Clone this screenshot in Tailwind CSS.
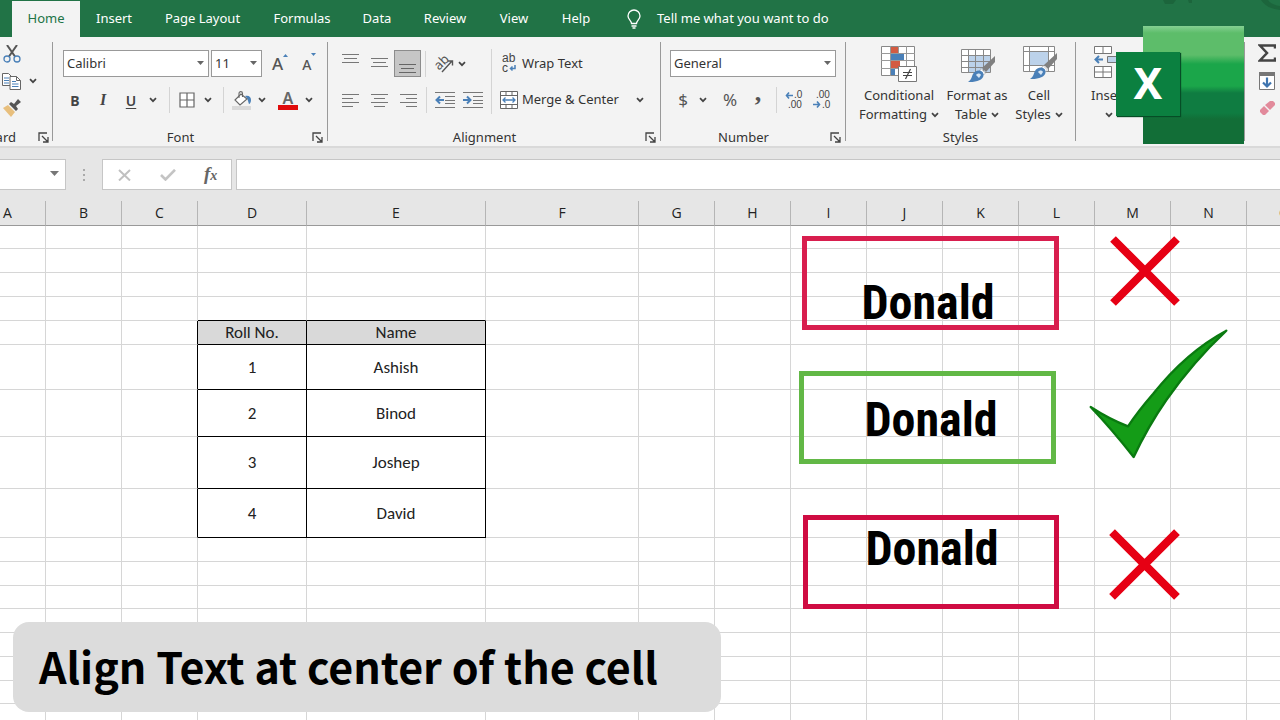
<!DOCTYPE html>
<html lang="en">
<head>
<meta charset="utf-8">
<title>Align Text at center of the cell</title>
<script src="https://cdn.jsdelivr.net/npm/@tailwindcss/browser@4"></script>
</head>
<body class="relative flex h-screen flex-col overflow-hidden bg-white font-['Noto_Sans','Open_Sans',sans-serif] text-[13px] text-[#333]">

<svg class="hidden" aria-hidden="true">
  <symbol id="chev" viewBox="0 0 8 6"><path d="M1 1.2 4 4.2 7 1.2" fill="none" stroke="#444" stroke-width="1.7"/></symbol>
  <symbol id="drop" viewBox="0 0 7 4"><path d="M0 0h7L3.500 4z" fill="#666"/></symbol>
  <symbol id="launch" viewBox="0 0 11 11"><path d="M1 9V1h8M4 4l5.500 5.500M10 5v5H5" fill="none" stroke="#444" stroke-width="1.300"/></symbol>
  <symbol id="paint" viewBox="0 0 28 28"><path d="M27 1v6l-9 10-4-4z" fill="#808080"/><path d="M13 13.500l4.500 4.500-2 2-4-4z" fill="#fff" stroke="#999" stroke-width=".6"/><path d="M11 15.500c3 0 5 2.500 4.500 5C15 25 8 27.500 0 27c4-3 3.500-5 5-8 1-2.300 3.500-3.500 6-3.500z" fill="#4a80b8"/><path d="M8 20c1.500-2 4-2 5 0l-2 3z" fill="#d7e6f5"/></symbol>
</svg>

<nav class="flex h-[37px] shrink-0 items-end bg-[#217346] pl-3 text-white" aria-label="Ribbon tabs">
  <button class="h-9 w-[68px] bg-[#f3f3f3] text-[#217346]">Home</button>
  <button class="h-9 w-[68px]">Insert</button>
  <button class="h-9 w-[109px]">Page Layout</button>
  <button class="h-9 w-[90px]">Formulas</button>
  <button class="h-9 w-[60px]">Data</button>
  <button class="h-9 w-[76px]">Review</button>
  <button class="h-9 w-[62px]">View</button>
  <button class="h-9 w-[62px]">Help</button>
  <button class="ml-5 flex h-9 items-center gap-4">
    <svg class="h-5 w-[14px]" viewBox="0 0 14 20" fill="none" stroke="#fff" stroke-width="1.300"><path d="M4.500 14.500c0-3-3.500-4-3.500-7.500a6 6 0 0 1 12 0c0 3.500-3.500 4.500-3.500 7.500zM4.500 17h5M5.500 19h3"/></svg>
    <span>Tell me what you want to do</span>
  </button>
  <svg class="ml-auto h-[37px] w-[130px]" viewBox="0 0 130 37"><path d="M13 0h13l-3 4h-8zM38 0h4v3h-3zM111 0c4 6 10 9 19 10V6c-6-1-10-3-12-6z" fill="#1c653c"/></svg>
</nav>

<header class="flex h-[109px] shrink-0 overflow-hidden bg-[#f3f3f3] pt-[5px] text-[#333]">
  <!-- Clipboard -->
  <section class="flex h-[99px] w-[53px] shrink-0 flex-col border-r border-[#999]">
    <button class="h-6 pl-[3px]" aria-label="Cut"><svg class="h-[18px] w-[18px]" viewBox="0 0 18 18" fill="none"><path d="M4 0l8 11.500M14 0L6 11.500" stroke="#555" stroke-width="2"/><circle cx="4" cy="14" r="3" stroke="#4a80b8" stroke-width="1.300"/><circle cx="14" cy="14" r="3" stroke="#4a80b8" stroke-width="1.300"/></svg></button>
    <button class="flex h-[30px] items-center gap-2 pl-[2px]" aria-label="Copy"><svg class="h-[17px] w-[19px]" viewBox="0 0 19 17" fill="#fff" stroke="#666"><path d="M.5.5h6l3 3v9h-9z"/><path d="M2 5h5M2 7.500h5M2 10h5" stroke="#4a80b8"/><path d="M8 3.500h6.500l4 4v9H8z"/><path d="M14.500 3.500v4h4" fill="none"/><path d="M10 8.500h4M10 11h6.500M10 13.500h6.500" stroke="#4a80b8"/></svg><svg class="h-[6px] w-2"><use href="#chev"/></svg></button>
    <button class="h-6 pl-[3px]" aria-label="Format Painter"><svg class="h-[18px] w-[19px]" viewBox="0 0 19 18"><path d="M0 9l5-3 7 7-4 5z" fill="#e8bf7d"/><path d="M6 5l7 7 2-2-2-3 5-4-3-3-4 5-3-2z" fill="#555"/></svg></button>
    <div class="mt-auto -mb-1 flex h-4 items-center"><span class="flex w-4 justify-end overflow-hidden leading-4 whitespace-nowrap">Clipboard</span><button class="ml-[22px]" aria-label="Clipboard options"><svg class="h-[11px] w-[11px]"><use href="#launch"/></svg></button></div>
  </section>

  <!-- Font -->
  <section class="flex h-[99px] w-[275px] shrink-0 flex-col border-r border-[#999]">
    <div class="flex h-[43px] items-center pl-[10px]">
      <label class="relative"><select aria-label="Font name" class="block h-[27px] w-[146px] appearance-none border border-[#999] bg-white pl-[3px]"><option>Calibri</option></select><svg class="pointer-events-none absolute top-[11px] right-[5px] h-1 w-[7px]"><use href="#drop"/></svg></label>
      <label class="relative ml-[2px]"><select aria-label="Font size" class="block h-[27px] w-[51px] appearance-none border border-[#999] bg-white pl-[3px]"><option>11</option></select><svg class="pointer-events-none absolute top-[11px] right-[5px] h-1 w-[7px]"><use href="#drop"/></svg></label>
      <button class="ml-[10px] flex font-medium" aria-label="Increase font size"><span class="text-[17px] leading-5 text-[#555]">A</span><svg class="h-[3px] w-[5px]" viewBox="0 0 5 3"><path d="M2.500 0 5 3H0z" fill="#4a80b8"/></svg></button>
      <button class="ml-[14px] flex font-medium" aria-label="Decrease font size"><span class="pt-[2px] text-[14px] leading-5 text-[#555]">A</span><svg class="h-[3px] w-[5px]" viewBox="0 0 5 3"><path d="M0 0h5L2.500 3z" fill="#4a80b8"/></svg></button>
    </div>
    <div class="flex h-[30px] items-center pl-2 text-[#444]">
      <button class="w-7 text-[14px] font-bold">B</button>
      <button class="w-7 font-['Liberation_Serif',serif] text-[16px] font-bold italic">I</button>
      <button class="w-7 text-[14px] font-semibold underline underline-offset-2">U</button>
      <button class="grid w-4 place-items-center" aria-label="Underline styles"><svg class="h-[6px] w-2"><use href="#chev"/></svg></button>
      <i class="ml-2 h-[26px] w-px bg-[#d4d4d4]"></i>
      <button class="ml-[9px]" aria-label="Borders"><svg class="h-4 w-4" viewBox="0 0 16 16" fill="#fff" stroke="#666" stroke-width="1.200"><path d="M1 1h14v14H1zM8 1v14M1 8h14"/></svg></button>
      <button class="ml-[9px]" aria-label="Border styles"><svg class="h-[6px] w-2"><use href="#chev"/></svg></button>
      <i class="ml-[11px] h-[26px] w-px bg-[#d4d4d4]"></i>
      <button class="ml-2" aria-label="Fill color"><svg class="h-[19px] w-5" viewBox="0 0 20 19"><path d="M0 15h19v4H0z" fill="#d9d9d9"/><path d="M13 5c4-1 6 1 6 4 0 2-1 4-2 4-1-3-1-5-4-8z" fill="#4a80b8"/><path d="M3 9l6-6 6 5-7 6z" fill="#fff" stroke="#666" stroke-width="1.100"/><path d="M7 7V2.500c0-2.500 3.500-2.500 3.500 0V6" fill="none" stroke="#666" stroke-width="1.100"/></svg></button>
      <button class="ml-[6px]" aria-label="Fill color options"><svg class="h-[6px] w-2"><use href="#chev"/></svg></button>
      <button class="ml-[12px] flex w-5 flex-col items-center" aria-label="Font color"><span class="text-[16px] leading-[14px] font-semibold text-[#666]">A</span><i class="h-[5px] w-5 bg-[#e00b0b]"></i></button>
      <button class="ml-[7px]" aria-label="Font color options"><svg class="h-[6px] w-2"><use href="#chev"/></svg></button>
    </div>
    <div class="mt-auto -mb-1 flex h-4 items-center leading-4"><span class="flex-1 text-center">Font</span><button class="w-[19px] pl-1" aria-label="Font options"><svg class="h-[11px] w-[11px]"><use href="#launch"/></svg></button></div>
  </section>

  <!-- Alignment -->
  <section class="flex h-[99px] w-[333px] shrink-0 flex-col border-r border-[#999]">
    <div class="flex pl-[14px]">
      <div>
        <div class="flex h-[43px] items-center">
          <button aria-label="Top align"><svg class="h-5 w-[17px]" viewBox="0 0 17 20" stroke="#777"><path d="M0 .5h17M2 4.500h13M0 8.500h17"/></svg></button>
          <button class="ml-3" aria-label="Middle align"><svg class="h-5 w-[17px]" viewBox="0 0 17 20" stroke="#777"><path d="M0 4.500h17M2 8.500h13M0 12.500h17"/></svg></button>
          <button class="ml-[6px] grid h-[27px] w-[27px] place-items-center border border-[#8c8c8c] bg-[#c6c6c6]" aria-label="Bottom align" aria-pressed="true"><svg class="h-5 w-[17px]" viewBox="0 0 17 20" stroke="#666"><path d="M0 10.500h17M2 14.500h13M0 18.500h17"/></svg></button>
          <i class="ml-1 h-[26px] w-px bg-[#d4d4d4]"></i>
          <button class="ml-2 flex items-center gap-1" aria-label="Orientation"><svg class="h-5 w-[20px] overflow-visible" viewBox="0 0 20 20" fill="none" stroke="#555" stroke-width="1.400"><text x="1" y="15" transform="rotate(-45 5 11)" font-size="13" fill="#555" stroke="none">ab</text><path d="M8 18 18 7M14 7h4.500v4.500"/></svg><svg class="h-[6px] w-2"><use href="#chev"/></svg></button>
        </div>
        <div class="flex h-[30px] items-center">
          <button aria-label="Align left"><svg class="h-[13px] w-[17px]" viewBox="0 0 17 13" stroke="#777"><path d="M0 .5h17M0 4.500h11M0 8.500h17M0 12.500h11"/></svg></button>
          <button class="ml-3" aria-label="Center"><svg class="h-[13px] w-[17px]" viewBox="0 0 17 13" stroke="#777"><path d="M0 .5h17M3 4.500h11M0 8.500h17M3 12.500h11"/></svg></button>
          <button class="ml-3" aria-label="Align right"><svg class="h-[13px] w-[17px]" viewBox="0 0 17 13" stroke="#777"><path d="M0 .5h17M6 4.500h11M0 8.500h17M6 12.500h11"/></svg></button>
          <i class="ml-[9px] h-[26px] w-px bg-[#d4d4d4]"></i>
          <button class="ml-2" aria-label="Decrease indent"><svg class="h-4 w-5" viewBox="0 0 20 16" fill="none" stroke="#777"><path d="M0 .5h20M10 4.500h10M10 8.500h10M10 11.500h10M0 15.500h20"/><path d="M9 8H1.500M5 4.500 1.500 8 5 11.500" stroke="#4a80b8" stroke-width="2"/></svg></button>
          <button class="ml-2" aria-label="Increase indent"><svg class="h-4 w-5" viewBox="0 0 20 16" fill="none" stroke="#777"><path d="M0 .5h20M10 4.500h10M10 8.500h10M10 11.500h10M0 15.500h20"/><path d="M0 8h7.500M4 4.500 7.500 8 4 11.500" stroke="#4a80b8" stroke-width="2"/></svg></button>
        </div>
      </div>
      <i class="mt-[7px] ml-2 h-[65px] w-px bg-[#d4d4d4]"></i>
      <div class="ml-2">
        <button class="flex h-[43px] items-center gap-1 whitespace-nowrap"><svg class="h-[19px] w-[18px] overflow-visible font-['Liberation_Sans',sans-serif]" viewBox="0 0 18 19" fill="#444" font-size="12"><text x="2" y="8">ab</text><text x="2" y="18">c</text><path d="M15 11v3.500h-4M12.500 12.500l-2 2 2 2" fill="none" stroke="#4a80b8" stroke-width="1.500"/></svg><span>Wrap Text</span></button>
        <div class="flex h-[30px] items-center"><button class="flex w-[136px] items-center gap-1 whitespace-nowrap"><svg class="h-[18px] w-[18px]" viewBox="0 0 18 18" fill="#fff" stroke="#666"><path d="M.5.5h17v17H.5zM.5 4.500h17M.5 13.500h17M6 .5v4M12 .5v4M6 13.500v4M12 13.500v4"/><path d="M3 9h12M5.500 6.500 3 9l2.500 2.500M12.500 6.500 15 9l-2.500 2.500" fill="none" stroke="#4a80b8" stroke-width="1.300"/></svg><span>Merge &amp; Center</span></button><button aria-label="Merge options"><svg class="h-[6px] w-2"><use href="#chev"/></svg></button></div>
      </div>
    </div>
    <div class="mt-auto -mb-1 flex h-4 items-center leading-4"><span class="flex-1 text-center">Alignment</span><button class="w-[19px] pl-1" aria-label="Alignment options"><svg class="h-[11px] w-[11px]"><use href="#launch"/></svg></button></div>
  </section>

  <!-- Number -->
  <section class="flex h-[99px] w-[185px] shrink-0 flex-col border-r border-[#999]">
    <div class="flex h-[43px] items-center pl-[9px]">
      <label class="relative"><select aria-label="Number format" class="block h-[27px] w-[166px] appearance-none border border-[#999] bg-white pl-[3px]"><option>General</option></select><svg class="pointer-events-none absolute top-[11px] right-[5px] h-1 w-[7px]"><use href="#drop"/></svg></label>
    </div>
    <div class="flex h-[30px] items-center pl-[14px] text-[#555]">
      <button class="w-4 text-[17px]">$</button>
      <button class="ml-2" aria-label="Currency options"><svg class="h-[6px] w-2"><use href="#chev"/></svg></button>
      <button class="ml-[13px] flex w-5 justify-center text-[17px]">%</button>
      <button class="ml-3 flex h-[30px] w-3 justify-center font-['Liberation_Serif',serif] text-[26px] leading-[16px] font-bold">,</button>
      <i class="ml-3 h-[26px] w-px bg-[#d4d4d4]"></i>
      <button class="ml-2" aria-label="Increase decimal"><svg class="h-[18px] w-[19px] overflow-visible font-['Liberation_Sans',sans-serif]" viewBox="0 0 19 18" fill="#444" font-size="10"><text x="9" y="7">.0</text><text x="3" y="17">.00</text><path d="M8 4.500H1.500M4 1.500 1.500 4.500 4 7.500" fill="none" stroke="#4a80b8" stroke-width="1.600"/></svg></button>
      <button class="ml-[9px]" aria-label="Decrease decimal"><svg class="h-[18px] w-[19px] overflow-visible font-['Liberation_Sans',sans-serif]" viewBox="0 0 19 18" fill="#444" font-size="10"><text x="3" y="7">.00</text><text x="9" y="17">.0</text><path d="M0 13.500h6.500M4 10.500l2.500 3-2.500 3" fill="none" stroke="#4a80b8" stroke-width="1.600"/></svg></button>
    </div>
    <div class="mt-auto -mb-1 flex h-4 items-center leading-4"><span class="flex-1 text-center">Number</span><button class="w-[19px] pl-1" aria-label="Number options"><svg class="h-[11px] w-[11px]"><use href="#launch"/></svg></button></div>
  </section>

  <!-- Styles -->
  <section class="flex h-[99px] w-[230px] shrink-0 flex-col border-r border-[#999]">
    <div class="flex pt-1 pl-[10px] leading-[19px] whitespace-nowrap">
      <button class="flex w-[86px] flex-col items-center">
        <svg class="h-10 w-[36px]" viewBox="0 0 36 40"><path d="M.5.500h33v29H.5z" fill="#fff" stroke="#888"/><path d="M9 1h8v6H9zM9 15h10v7H9z" fill="#d35b41"/><path d="M9 8h14v6H9zM9 23h5v6H9z" fill="#4a80b8"/><path d="M9.500 0v30M17.500 0v7M25.500 0v30M0 7.500h34M0 14.500h34M0 22.500h34" stroke="#999" fill="none"/><path d="M17.500 20.500h18v15h-18z" fill="#fff" stroke="#777"/><path d="M22 26.500h9M22 29.500h9M29.500 23l-5 10" stroke="#444" stroke-width="1.200"/></svg>
        <span>Conditional</span><span class="flex items-center gap-1">Formatting<svg class="h-[6px] w-2"><use href="#chev"/></svg></span>
      </button>
      <button class="flex w-[70px] flex-col items-center">
        <svg class="h-10 w-[36px]" viewBox="0 0 36 40"><path d="M2.500 3.500h29v23h-29z" fill="#fff"/><path d="M10 10h21v16H10z" fill="#bcd2ea"/><path d="M2.500 3.500h29v23h-29zM2 9.500h30M2 15.500h30M2 21.500h30M9.500 3v24M16.500 3v24M24.500 3v24" fill="none" stroke="#888"/><svg x="9" y="9" width="28" height="28"><use href="#paint"/></svg></svg>
        <span>Format as</span><span class="flex items-center gap-1">Table<svg class="h-[6px] w-2"><use href="#chev"/></svg></span>
      </button>
      <button class="flex w-[54px] flex-col items-center">
        <svg class="h-10 w-[36px]" viewBox="0 0 36 40"><path d="M2.500.500h31v25h-31z" fill="#fff"/><path d="M9 6h18v13H9z" fill="#bcd2ea"/><path d="M2.500.500h31v25h-31zM8.500 0v26M27.500 0v26M2 5.500h32M2 19.500h32" fill="none" stroke="#888"/><svg x="9" y="6" width="28" height="28"><use href="#paint"/></svg></svg>
        <span>Cell</span><span class="flex items-center gap-1">Styles<svg class="h-[6px] w-2"><use href="#chev"/></svg></span>
      </button>
    </div>
    <div class="mt-auto -mb-1 h-4 text-center leading-4">Styles</div>
  </section>

  <!-- Cells -->
  <section class="h-[99px] w-[169px] shrink-0 border-r border-[#999] pt-1 pl-4 leading-[19px]">
    <button class="flex w-[34px] flex-col items-center">
      <svg class="h-10 w-[34px]" viewBox="0 0 34 40" fill="#fff" stroke="#777"><path d="M2.500.500h17v7h-17zM11 .500v7M2.500 20.500h17v11h-17zM2.500 26h17M11 20.500v11"/><path d="M15.500 10.500h10v6h-10z" fill="#bcd2ea"/><path d="M11 13.500H3.500M7 10l-3.500 3.500L7 17" fill="none" stroke="#4a80b8" stroke-width="2"/></svg>
      <span>Insert</span><span class="grid h-[19px] place-items-center"><svg class="h-[6px] w-2"><use href="#chev"/></svg></span>
    </button>
  </section>

  <!-- Editing -->
  <section class="flex h-[99px] shrink-0 flex-col gap-[10px] pt-[2px] pl-[13px]">
    <button aria-label="AutoSum"><svg class="h-[18px] w-[18px]" viewBox="0 0 18 18"><path d="M17 4.500V1.500H2l7 7.500-7 7.500h15v-3" fill="none" stroke="#444" stroke-width="2.500"/></svg></button>
    <button aria-label="Fill"><svg class="h-[18px] w-[18px]" viewBox="0 0 18 18"><path d="M1.500.500h15v17h-15z" fill="#fff" stroke="#777"/><path d="M1 0h16v4H1z" fill="#777"/><path d="M9 5.500v9M5 10.500l4 4 4-4" fill="none" stroke="#3f75b0" stroke-width="2.200"/></svg></button>
    <button aria-label="Clear"><svg class="h-[16px] w-[18px]" viewBox="0 0 18 16"><path d="M2 10l4-4 5 5-4 4H5l-3-3z" fill="#e28a9b"/><path d="M7 5l5-4h3l2 2v2l-5 5z" fill="#e28a9b"/></svg></button>
  </section>
</header>

<!-- Formula bar -->
<div class="flex h-[55px] shrink-0 items-start border-t-2 border-[#d9d9d9] bg-[#e6e6e6] pt-[11px]">
  <label class="relative"><input aria-label="Name box" class="block h-[31px] w-[66px] border border-l-0 border-[#c6c6c6] bg-white"><svg class="pointer-events-none absolute top-[12px] right-[7px] h-[5px] w-[9px]" viewBox="0 0 9 5"><path d="M0 0h9L4.500 5z" fill="#777"/></svg></label>
  <svg class="mt-[9px] ml-4 h-[14px] w-[4px]" viewBox="0 0 4 14" fill="#aaa"><path d="M1 1h2v2H1zM1 6h2v2H1zM1 11h2v2H1z"/></svg>
  <div class="ml-4 flex h-[31px] w-[130px] items-center border border-[#c6c6c6] bg-white">
    <button class="ml-[15px]" aria-label="Cancel"><svg class="h-[12px] w-[13px]" viewBox="0 0 13 12"><path d="M1 1l11 10.500M12 1 1 11.500" stroke="#c0c0c0" stroke-width="2"/></svg></button>
    <button class="ml-[29px]" aria-label="Enter"><svg class="h-[12px] w-[16px]" viewBox="0 0 16 12"><path d="M1 6l4.500 4.500L15 .800" fill="none" stroke="#c4c4c4" stroke-width="2.600"/></svg></button>
    <button class="ml-7 font-['Liberation_Serif',serif] text-[19px] leading-5 font-bold text-[#666] italic" aria-label="Insert function">f<span class="text-[14px]">x</span></button>
  </div>
  <input aria-label="Formula" class="ml-1 h-[31px] min-w-0 flex-1 border border-r-0 border-[#c6c6c6] bg-white">
</div>

<!-- Worksheet -->
<main class="min-h-0 flex-1 overflow-hidden">
  <table class="-ml-[30px] w-[1353px] table-fixed border-separate border-spacing-0 text-center font-['Carlito','Open_Sans',sans-serif] text-[17px] leading-4 text-[#222] [&_td]:border-r [&_td]:border-b [&_td]:border-[#d6d6d6] [&_td]:p-0 [&_td]:pt-px [&_th]:border-r [&_th]:border-b [&_th]:border-r-[#b5b5b5] [&_th]:border-b-[#999] [&_th]:bg-[#e6e6e6] [&_th]:p-0 [&_th]:font-normal [&_td.cr]:border-r-black [&_td.cb]:border-b-black">
    <colgroup><col class="w-[76px]"><col class="w-[76px]"><col class="w-[76px]"><col class="w-[109px]"><col class="w-[179px]"><col class="w-[153px]"><col span="9" class="w-[76px]"></colgroup>
    <thead><tr class="h-[25px] font-['Open_Sans',sans-serif] text-[14px]"><th>A</th><th>B</th><th>C</th><th>D</th><th>E</th><th>F</th><th>G</th><th>H</th><th>I</th><th>J</th><th>K</th><th>L</th><th>M</th><th>N</th><th>O</th></tr></thead>
    <tbody id="cells"></tbody>
  </table>
</main>
<script>
  // [row height class, D value, E value]
  const rows = [
    ['h-[23px]'], ['h-[24px]'], ['h-[24px]'], ['h-[24px]'],
    ['h-[24px]', 'Roll No.', 'Name'], ['h-[45px]', '1', 'Ashish'], ['h-[47px]', '2', 'Binod'],
    ['h-[52px]', '3', 'Joshep'], ['h-[49px]', '4', 'David'],
    ['h-[24px]'], ['h-[24px]'], ['h-[23px]'], ['h-[24px]'], ['h-[24px]'], ['h-[24px]'], ['h-[23px]'], ['h-[24px]']
  ];
  const body = document.getElementById('cells');
  rows.forEach(([height, d, e], r) => {
    const tr = body.insertRow();
    tr.className = height;
    for (let c = 0; c < 15; c++) {
      const td = tr.insertCell();
      if (d && c >= 2 && c <= 4) td.classList.add('cr');
      if ((d || r === 3) && (c === 3 || c === 4)) td.classList.add('cb');
      if (r === 4 && (c === 3 || c === 4)) td.classList.add('bg-[#d9d9d9]');
      if (d && c === 3) td.textContent = d;
      if (e && c === 4) td.textContent = e;
    }
  });
</script>

<!-- Excel logo -->
<div class="absolute top-[26px] left-[1143px] h-[118px] w-[101px] bg-[linear-gradient(#85d093_0,#5dbd6a_7px,#5dbd6a_29px,#1ba64a_38px,#1ba64a_60px,#0f7c41_67px,#0f7c41_87px,#126e37_93px)]"></div>
<div class="absolute top-[52px] left-[1116px] grid h-16 w-16 place-items-center bg-[#0b8040] pb-1 text-[43px] leading-none font-bold text-white shadow-[1px_1px_1px_#064d26]">X</div>

<!-- Callouts -->
<div class="absolute top-[236px] left-[802px] flex h-[94px] w-[257px] items-end justify-center border-5 border-[#d81e4e] pr-[5px] font-['Roboto_Condensed','Liberation_Sans_Narrow',sans-serif] text-[48px] leading-[44px] font-bold text-black">Donald</div>
<div class="absolute top-[371px] left-[799px] flex h-[93px] w-[257px] items-center justify-center border-5 border-[#62b846] pt-1 pl-[7px] font-['Roboto_Condensed','Liberation_Sans_Narrow',sans-serif] text-[48px] leading-[44px] font-bold text-black">Donald</div>
<div class="absolute top-[515px] left-[803px] flex h-[94px] w-[256px] items-start justify-center border-5 border-[#cf0c42] pt-[7px] pl-[2px] font-['Roboto_Condensed','Liberation_Sans_Narrow',sans-serif] text-[48px] leading-[44px] font-bold text-black">Donald</div>
<svg class="absolute top-[236px] left-[1110px] h-[70px] w-[70px]" viewBox="0 0 70 70"><path d="M3 3l64 64M67 3 3 67" stroke="#e60014" stroke-width="8"/></svg>
<svg class="absolute top-[529px] left-[1109px] h-[71px] w-[71px]" viewBox="0 0 70 70"><path d="M3 3l64 64M67 3 3 67" stroke="#e60014" stroke-width="8"/></svg>
<svg class="absolute top-[328px] left-[1088px] h-[132px] w-[140px]" viewBox="925 310 420 396"><path d="M933 547Q990 584 1045 605Q1075 560 1120 508Q1220 382 1340 318Q1240 412 1160 526Q1105 605 1062 697Q995 612 933 547z" fill="#149c17" stroke="#0a7a10" stroke-width="7" stroke-linejoin="round"/></svg>

<h1 class="absolute top-[622px] left-[13px] flex h-[90px] w-[708px] items-center rounded-2xl bg-[#dcdcdc] pb-1 pl-[26px] font-['Noto_Sans_CJK_SC',sans-serif] text-[43px] leading-none font-bold whitespace-nowrap text-black">Align Text at center of the cell</h1>
</body>
</html>
